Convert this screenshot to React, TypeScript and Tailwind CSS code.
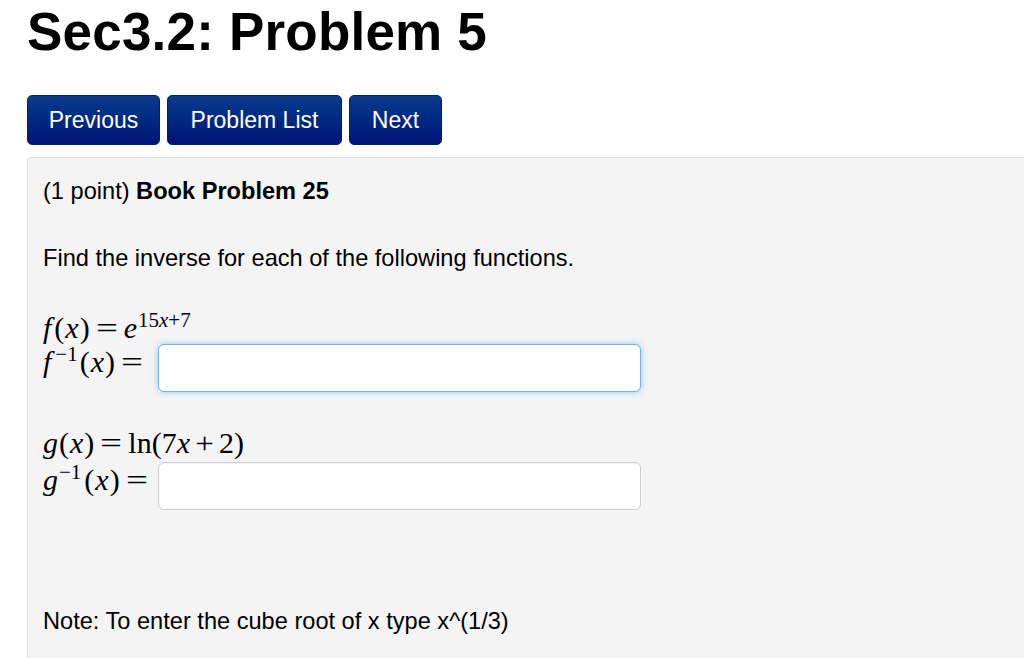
import React from "react";

const sans = { fontFamily: '"Liberation Sans", Arial, Helvetica, sans-serif' };
const serif = { fontFamily: '"Liberation Serif", "Times New Roman", serif' };

function Eq() {
  return (
    <span className="mx-[7px] inline-block w-[20px] scale-x-[1.3] text-center">=</span>
  );
}

function Sup({ children, className = "" }: { children: React.ReactNode; className?: string }) {
  return (
    <span className={"relative -top-[11px] text-[21px] leading-none " + className}>{children}</span>
  );
}

export default function App() {
  return (
    <div className="h-[658px] w-[1024px] overflow-hidden bg-white text-black" style={sans}>
      <div className="pt-[2px] pl-[27px]">
        <h1 className="text-[53px] font-bold leading-[60px] tracking-[0.2px]">Sec3.2: Problem 5</h1>
      </div>

      <div className="mt-[33px] flex gap-[7px] pl-[27px]">
        {[
          { label: "Previous", w: "w-[133px]" },
          { label: "Problem List", w: "w-[175px]" },
          { label: "Next", w: "w-[93px]" },
        ].map((b) => (
          <button
            key={b.label}
            className={
              b.w +
              " flex h-[50px] items-center justify-center rounded-[5px] border border-[#00206e] bg-gradient-to-b from-[#0b3a8e] to-[#001476] text-[23px] text-white"
            }
          >
            {b.label}
          </button>
        ))}
      </div>

      <div className="ml-[27px] mt-[12px] h-[600px] rounded-tl-[4px] border-l border-t border-[#e2e2e2] bg-[#f4f4f4] pl-[15px] pt-[18px]">
        <div className="text-[23.6px] leading-[30px]">
          (1 point) <span className="font-bold">Book Problem 25</span>
        </div>
        <div className="mt-[37px] text-[23.6px] leading-[30px]">
          Find the inverse for each of the following functions.
        </div>

        <div style={serif} className="text-[30px]">
          <div className="mt-[39px] h-[32px] leading-[32px] whitespace-nowrap">
            <i className="mr-[3px]">f</i>(<i className="mx-[1px]">x</i>)<Eq />
            <i>e</i>
            <Sup className="ml-[1px]">
              15<i>x</i>+7
            </Sup>
          </div>
          <div className="flex items-start">
            <div className="mt-[2px] w-[115px] shrink-0 leading-[32px] whitespace-nowrap">
              <i className="mr-[2px]">f</i>
              <Sup className="ml-[2px]">−1</Sup>
              <span className="ml-[2px]">(</span>
              <i className="mx-[1px]">x</i>)<Eq />
            </div>
            <div className="h-[48px] w-[483px] rounded-[6px] border border-[#76afe6] bg-white shadow-[0_0_7px_rgba(102,175,233,0.65)]" />
          </div>

          <div className="mt-[35px] h-[32px] leading-[32px] whitespace-nowrap">
            <i className="mr-[1px]">g</i>(<i className="mx-[1px]">x</i>)<Eq />
            ln(7<i>x</i>
            <span className="mx-[6px] inline-block scale-x-[1.1]">+</span>2)
          </div>
          <div className="mt-[3px] flex items-start">
            <div className="mt-[2px] w-[115px] shrink-0 leading-[32px] whitespace-nowrap">
              <i>g</i>
              <Sup className="ml-[1px]">−1</Sup>
              <span className="ml-[3px]">(</span>
              <i className="mx-[1px]">x</i>)<Eq />
            </div>
            <div className="h-[48px] w-[483px] rounded-[6px] border border-[#cfcfcf] bg-white shadow-[inset_0_1px_1px_rgba(0,0,0,0.06)]" />
          </div>
        </div>

        <div className="mt-[96px] text-[23.6px] leading-[30px]">
          Note: To enter the cube root of x type x^(1/3)
        </div>
      </div>
    </div>
  );
}
